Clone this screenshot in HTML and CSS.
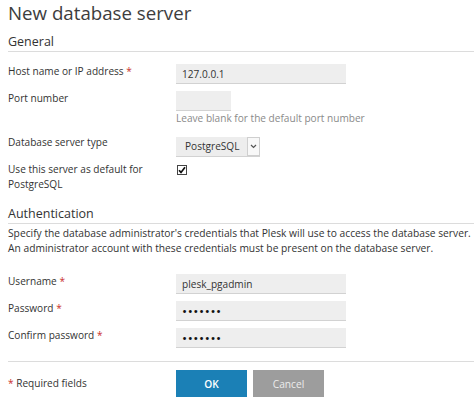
FILE: index.html
```html
<!DOCTYPE html>
<html>
<head>
<meta charset="utf-8">
<link rel="stylesheet" href="styles.css">
</head>
<body>
<div class="page">
  <h1 class="title">New database server</h1>

  <h2 class="section">General</h2>
  <div class="row row-host">
    <div class="label">Host name or IP address <span class="req">*</span></div>
    <div class="field"><input class="text wide" type="text" value="127.0.0.1"></div>
  </div>
  <div class="row row-port">
    <div class="label">Port number</div>
    <div class="field">
      <input class="text short" type="text" value="">
      <div class="hint">Leave blank for the default port number</div>
    </div>
  </div>
  <div class="row row-type">
    <div class="label">Database server type</div>
    <div class="field">
      <div class="select">
        <span class="select-text">PostgreSQL</span>
        <span class="select-arrow"><svg width="7" height="5" viewBox="0 0 7 5"><path d="M1 1 L3.5 3.5 L6 1" fill="none" stroke="#555" stroke-width="1.2"/></svg></span>
      </div>
    </div>
  </div>
  <div class="row row-check">
    <div class="label">Use this server as default for PostgreSQL</div>
    <div class="field">
      <span class="checkbox"><svg width="8" height="8" viewBox="0 0 8 8"><path d="M1 4.2 L3 6.4 L7 1.2" fill="none" stroke="#111" stroke-width="1.7"/></svg></span>
    </div>
  </div>

  <h2 class="section section-auth">Authentication</h2>
  <p class="intro">Specify the database administrator's credentials that Plesk will use to access the database server. An administrator account with these credentials must be present on the database server.</p>
  <div class="row row-user">
    <div class="label">Username <span class="req">*</span></div>
    <div class="field"><input class="text wide" type="text" value="plesk_pgadmin"></div>
  </div>
  <div class="row">
    <div class="label">Password <span class="req">*</span></div>
    <div class="field"><input class="text wide pw" type="password" value="1234567"></div>
  </div>
  <div class="row">
    <div class="label">Confirm password <span class="req">*</span></div>
    <div class="field"><input class="text wide pw" type="password" value="1234567"></div>
  </div>

  <div class="footer">
    <div class="label"><span class="req">*</span> Required fields</div>
    <div class="buttons">
      <button class="btn btn-ok">OK</button>
      <button class="btn btn-cancel">Cancel</button>
    </div>
  </div>
</div>
</body>
</html>
```
FILE: styles.css
```css
html, body {
  margin: 0;
  padding: 0;
  background: #fff;
}
body {
  font-family: "Open Sans", "Liberation Sans", sans-serif;
  font-size: 10.1px;
  color: #333;
}
.page {
  padding-left: 8px;
}
.title {
  margin: 0;
  font-size: 18.7px;
  line-height: 26px;
  font-weight: 400;
  color: #3d3d3d;
}
.section {
  margin: 7px 0 0 0;
  font-size: 12.5px;
  line-height: 18px;
  font-weight: 400;
  color: #333;
  border-bottom: 1px solid #dcdcdc;
}
.section-auth {
  margin-top: 13px;
}
.row {
  display: grid;
  grid-template-columns: 168px 1fr;
  margin-top: 7px;
}
.row-host {
  margin-top: 12px;
}
.row-type {
  margin-top: 9px;
}
.row-check {
  margin-top: 5px;
}
.row-user {
  margin-top: 19px;
}
.label {
  line-height: 15px;
  padding-right: 10px;
}
.req {
  color: #c9302c;
}
.field {
  line-height: 15px;
}
.text {
  display: block;
  box-sizing: border-box;
  height: 20px;
  margin: 0;
  padding: 0 6px;
  border: none;
  border-bottom: 1px solid #d2d2d2;
  background: #eeeeee;
  font-family: "Open Sans", "Liberation Sans", sans-serif;
  font-size: 10.1px;
  color: #333;
  outline: none;
}
.wide {
  width: 170px;
}
.short {
  width: 55px;
}
.pw {
  font-size: 13.5px;
  letter-spacing: 0.6px;
  color: #111;
}
.hint {
  color: #8a8a8a;
}
.select {
  display: flex;
  width: 84px;
  height: 20px;
  margin-top: 2px;
  box-sizing: border-box;
  background: #ededed;
  border-bottom: 1px solid #d2d2d2;
}
.select-text {
  flex: 1;
  line-height: 19px;
  padding-left: 9px;
}
.select-arrow {
  width: 13px;
  box-sizing: border-box;
  border: 1px solid #cfcfcf;
  background: #f8f8f8;
  display: flex;
  align-items: center;
  justify-content: center;
}
.checkbox {
  display: flex;
  align-items: center;
  justify-content: center;
  width: 10px;
  height: 10px;
  box-sizing: border-box;
  margin-top: 3px;
  margin-left: 1px;
  border: 1px solid #444;
  background: #fff;
}
.intro {
  margin: 2px 0 0 0;
  font-size: 10.25px;
  line-height: 14.5px;
}
.footer {
  display: grid;
  grid-template-columns: 168px 1fr;
  align-items: center;
  margin-top: 13px;
  padding-top: 8px;
  border-top: 1px solid #dcdcdc;
}
.buttons {
  display: flex;
  gap: 6px;
}
.btn {
  width: 71px;
  height: 27px;
  border: none;
  margin: 0;
  padding: 0;
  font-family: "Open Sans", "Liberation Sans", sans-serif;
  font-size: 10.2px;
  font-weight: 600;
  color: #fff;
}
.btn-ok {
  background: #1b80b6;
}
.btn-cancel {
  background: #9d9d9d;
  color: #ececec;
  font-weight: 400;
}
```
